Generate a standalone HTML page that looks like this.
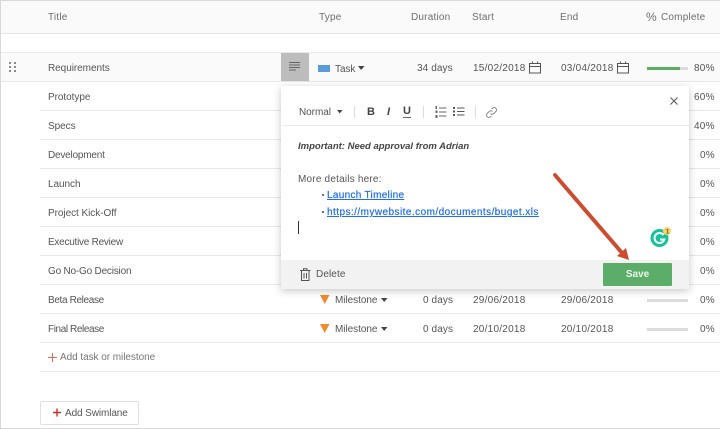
<!DOCTYPE html>
<html>
<head>
<meta charset="utf-8">
<style>
html,body{margin:0;padding:0;background:#fff}
#p{position:relative;width:720px;height:429px;overflow:hidden;background:#fff;font-family:"Liberation Sans",sans-serif;font-size:10px;color:#555}
#p div,#p span.a,#p svg{position:absolute}
.t{white-space:nowrap;line-height:14px;height:14px;margin-top:1px}
.l{height:1px;background:#e8e8e8}
.h{color:#6d6d6d;font-size:10px;letter-spacing:.2px}
.r{color:#555;letter-spacing:-.05px}
.d{color:#555;letter-spacing:.25px}
</style>
</head>
<body>
<div id="p">
<div style="left:0;top:0;width:720px;height:1px;background:#d8d8d8"></div>
<div style="left:0;top:0;width:1px;height:429px;background:#d8d8d8"></div>
<div style="left:0;top:428px;width:720px;height:1px;background:#d8d8d8"></div>
<div style="left:1px;top:1px;width:719px;height:32px;background:#fafafa"></div>
<div style="left:1px;top:33px;width:719px;height:1px;background:#e6e6e6"></div>
<div class="t h" style="left:48px;top:10px">Title</div>
<div class="t h" style="left:319px;top:10px">Type</div>
<div class="t h" style="left:411px;top:10px">Duration</div>
<div class="t h" style="left:472px;top:10px">Start</div>
<div class="t h" style="left:560px;top:10px">End</div>
<div class="t h" style="left:646px;top:9px;font-size:12px">%</div>
<div class="t h" style="left:661px;top:10px">Complete</div>

<div style="left:1px;top:52px;width:719px;height:1px;background:#e8e8e8"></div>
<div style="left:1px;top:53px;width:719px;height:28px;background:#fafafa"></div>
<div style="left:1px;top:81px;width:719px;height:1px;background:#e8e8e8"></div>
<div class="l" style="left:40px;top:110px;width:680px"></div>
<div class="l" style="left:40px;top:139px;width:680px"></div>
<div class="l" style="left:40px;top:168px;width:680px"></div>
<div class="l" style="left:40px;top:197px;width:680px"></div>
<div class="l" style="left:40px;top:226px;width:680px"></div>
<div class="l" style="left:40px;top:255px;width:680px"></div>
<div class="l" style="left:40px;top:284px;width:680px"></div>
<div class="l" style="left:40px;top:313px;width:680px"></div>
<div class="l" style="left:40px;top:342px;width:680px"></div>
<div class="l" style="left:40px;top:371px;width:680px"></div>

<svg style="left:9px;top:62px" width="8" height="11" viewBox="0 0 8 11" fill="#8a8a8a"><rect x="0" y="0" width="2" height="2"/><rect x="5" y="0" width="2" height="2"/><rect x="0" y="4" width="2" height="2"/><rect x="5" y="4" width="2" height="2"/><rect x="0" y="8" width="2" height="2"/><rect x="5" y="8" width="2" height="2"/></svg>

<div class="t r" style="left:48px;top:61px">Requirements</div>
<div class="t r" style="left:48px;top:90px">Prototype</div>
<div class="t r" style="left:48px;top:119px">Specs</div>
<div class="t r" style="left:48px;top:148px;letter-spacing:-.2px">Development</div>
<div class="t r" style="left:48px;top:177px">Launch</div>
<div class="t r" style="left:48px;top:206px">Project Kick-Off</div>
<div class="t r" style="left:48px;top:235px;letter-spacing:-.25px">Executive Review</div>
<div class="t r" style="left:48px;top:264px;letter-spacing:-.2px">Go No-Go Decision</div>
<div class="t r" style="left:48px;top:293px;letter-spacing:-.35px">Beta Release</div>
<div class="t r" style="left:48px;top:322px;letter-spacing:-.4px">Final Release</div>

<div style="left:281px;top:53px;width:28px;height:28px;background:#bdbdbd"></div>
<svg style="left:289px;top:62px" width="12" height="9" viewBox="0 0 12 9" fill="#666"><rect width="11" height="1"/><rect y="2.5" width="11" height="1"/><rect y="5" width="11" height="1"/><rect y="7.5" width="7" height="1"/></svg>
<div style="left:318px;top:65px;width:12px;height:7px;background:#5b9bd9"></div>
<div class="t r" style="left:335px;top:62px">Task</div>
<svg style="left:358px;top:66px" width="7" height="5"><path d="M0 0H6.5L3.2 4z" fill="#444"/></svg>
<div class="t d" style="left:417px;top:61px;letter-spacing:.1px">34 days</div>
<div class="t d" style="left:473px;top:61px">15/02/2018</div>
<svg style="left:529px;top:61px" width="13" height="13" viewBox="0 0 13 13" fill="none" stroke="#555"><rect x=".5" y="2.5" width="11" height="9.5"/><path d="M.5 5.5H11.5M3.5 .5V3M8.5 .5V3"/></svg>
<div class="t d" style="left:561px;top:61px">03/04/2018</div>
<svg style="left:617px;top:61px" width="13" height="13" viewBox="0 0 13 13" fill="none" stroke="#555"><rect x=".5" y="2.5" width="11" height="9.5"/><path d="M.5 5.5H11.5M3.5 .5V3M8.5 .5V3"/></svg>
<div style="left:647px;top:67px;width:41px;height:3px;background:#dcdcdc"></div>
<div style="left:647px;top:67px;width:33px;height:3px;background:#5cae62"></div>
<div class="t d" style="left:694px;top:61px">80%</div>
<div class="t d" style="left:694px;top:90px">60%</div>
<div class="t d" style="left:694px;top:119px">40%</div>
<div class="t d" style="left:700px;top:148px">0%</div>
<div class="t d" style="left:700px;top:177px">0%</div>
<div class="t d" style="left:700px;top:206px">0%</div>
<div class="t d" style="left:700px;top:235px">0%</div>
<div class="t d" style="left:700px;top:264px">0%</div>
<div class="t d" style="left:700px;top:293px">0%</div>
<div class="t d" style="left:700px;top:322px">0%</div>

<svg style="left:320px;top:295px" width="10" height="9"><path d="M0 0H9.5L4.7 9z" fill="#f08a2c"/></svg>
<div class="t r" style="left:335px;top:293px">Milestone</div>
<svg style="left:381px;top:298px" width="7" height="5"><path d="M0 0H6.5L3.2 4z" fill="#444"/></svg>
<div class="t d" style="left:423px;top:293px;letter-spacing:.1px">0 days</div>
<div class="t d" style="left:473px;top:293px">29/06/2018</div>
<div class="t d" style="left:561px;top:293px">29/06/2018</div>
<div style="left:647px;top:299px;width:41px;height:3px;background:#dcdcdc"></div>
<svg style="left:320px;top:324px" width="10" height="9"><path d="M0 0H9.5L4.7 9z" fill="#f08a2c"/></svg>
<div class="t r" style="left:335px;top:322px">Milestone</div>
<svg style="left:381px;top:327px" width="7" height="5"><path d="M0 0H6.5L3.2 4z" fill="#444"/></svg>
<div class="t d" style="left:423px;top:322px;letter-spacing:.1px">0 days</div>
<div class="t d" style="left:473px;top:322px">20/10/2018</div>
<div class="t d" style="left:561px;top:322px">20/10/2018</div>
<div style="left:647px;top:328px;width:41px;height:3px;background:#dcdcdc"></div>

<svg style="left:48px;top:353px" width="9" height="9"><path d="M4.5 0V9M0 4.5H9" stroke="#d9694f" stroke-width="1"/></svg>
<div class="t" style="left:60px;top:350px;color:#777;letter-spacing:-.05px">Add task or milestone</div>

<div style="left:40px;top:401px;width:97px;height:22px;border:1px solid #dfdfdf;border-radius:2px;background:#fff"></div>
<svg style="left:53px;top:408px" width="8" height="9"><path d="M4 .5V8.5M0 4.5H8" stroke="#c9302c" stroke-width="1.4"/></svg>
<div class="t" style="left:65px;top:406px;color:#555;letter-spacing:-.1px">Add Swimlane</div>

<!-- popup -->
<div style="left:281px;top:86px;width:408px;height:203px;background:#fff;box-shadow:0 2px 8px rgba(0,0,0,.22)"></div>
<div style="left:281px;top:260px;width:408px;height:29px;background:#f2f2f2"></div>
<div style="left:281px;top:125px;width:408px;height:1px;background:#ececec"></div>

<div class="t" style="left:299px;top:105px;color:#555;letter-spacing:-.05px">Normal</div>
<svg style="left:337px;top:110px" width="6" height="4"><path d="M0 0H5.5L2.7 3.5z" fill="#444"/></svg>
<div style="left:354px;top:106px;width:1px;height:12px;background:#ddd"></div>
<div class="t" style="left:367px;top:104px;font-weight:bold;color:#444;font-size:11px">B</div>
<div class="t" style="left:387px;top:104px;font-style:italic;font-weight:bold;color:#444;font-size:11px">I</div>
<div class="t" style="left:403px;top:103px;color:#444;font-size:11px;font-weight:bold">U</div>
<div style="left:403px;top:117px;width:8px;height:1px;background:#666"></div>
<div style="left:423px;top:106px;width:1px;height:12px;background:#ddd"></div>
<svg style="left:435px;top:106px" width="12" height="13" viewBox="0 0 12 13" fill="#666"><rect x="4" y="1.5" width="7.5" height="1"/><rect x="4" y="5.5" width="7.5" height="1"/><rect x="4" y="9.5" width="7.5" height="1"/><rect x=".5" y="0" width="1.5" height="3"/><rect x=".5" y="4.5" width="2" height="2.5"/><rect x=".5" y="9" width="2" height="3"/></svg>
<svg style="left:453px;top:106px" width="12" height="11" viewBox="0 0 12 11" fill="#555"><rect x="0" y="1" width="2" height="2"/><rect x="0" y="4.5" width="2" height="2"/><rect x="0" y="8" width="2" height="2"/><rect x="4" y="1.5" width="7.5" height="1"/><rect x="4" y="5" width="7.5" height="1"/><rect x="4" y="8.5" width="7.5" height="1"/></svg>
<div style="left:475px;top:106px;width:1px;height:12px;background:#ddd"></div>
<svg style="left:485px;top:106px" width="13" height="13" viewBox="0 0 13 13" fill="none" stroke="#888"><path d="M5.5 7.5a2.3 2.3 0 0 0 3.3 0l2-2a2.3 2.3 0 0 0-3.3-3.3l-1 1"/><path d="M7.5 5.5a2.3 2.3 0 0 0-3.3 0l-2 2a2.3 2.3 0 0 0 3.3 3.3l1-1"/></svg>
<svg style="left:670px;top:97px" width="8" height="8"><path d="M.5 .5L7.5 7.5M7.5 .5L.5 7.5" stroke="#555" stroke-width="1"/></svg>

<div class="t" style="left:298px;top:139px;font-style:italic;font-weight:bold;color:#444;font-size:9.5px">Important: Need approval from Adrian</div>
<div class="t" style="left:298px;top:172px;color:#555;letter-spacing:.2px">More details here:</div>
<div style="left:322px;top:194px;width:2px;height:2px;background:#444;border-radius:50%"></div>
<div class="t" style="left:327px;top:188px;color:#1f6fe5;text-decoration:underline;letter-spacing:.3px;-webkit-text-stroke:.2px #1f6fe5">Launch Timeline</div>
<div style="left:322px;top:211px;width:2px;height:2px;background:#444;border-radius:50%"></div>
<div class="t" style="left:327px;top:205px;color:#1f6fe5;text-decoration:underline;letter-spacing:.45px;-webkit-text-stroke:.2px #1f6fe5">https://mywebsite.com/documents/buget.xls</div>
<div style="left:298px;top:221px;width:1px;height:13px;background:#333"></div>

<svg style="left:650px;top:227px" width="24" height="21" viewBox="0 0 24 21"><circle cx="9.5" cy="11" r="9" fill="#15c39a"/><path d="M13.5 8a5 5 0 1 0 .8 4.5H10" fill="none" stroke="#fff" stroke-width="2"/><circle cx="17" cy="4" r="4" fill="#fbd46d"/><text x="15.7" y="6.5" font-size="6.5" font-weight="bold" fill="#7a5a10" font-family="Liberation Sans">1</text></svg>

<svg style="left:300px;top:268px" width="11" height="13" viewBox="0 0 11 13" fill="none" stroke="#555"><path d="M0 2.5H10.5M3.5 2.5V.7H7V2.5M1.5 2.5V12.5H9V2.5M4 5V10.5M6.5 5V10.5"/></svg>
<div class="t" style="left:316px;top:267px;color:#555;letter-spacing:.1px">Delete</div>

<div style="left:603px;top:263px;width:69px;height:23px;background:#5bad69;border-radius:1px"></div>
<div class="t" style="left:603px;top:267px;width:69px;text-align:center;color:#eef7ee;font-weight:bold;font-size:10px">Save</div>

<svg style="left:550px;top:170px" width="85" height="95" viewBox="0 0 85 95">
<path d="M5 5L73 84" stroke="rgba(0,0,0,.2)" stroke-width="4" fill="none" transform="translate(1,1.5)"/>
<path d="M5 5L73 84" stroke="#cf4b2f" stroke-width="3.8" stroke-linecap="round" fill="none"/>
<path d="M79 90L76 78L67 86z" fill="#cf4b2f"/>
</svg>
</div>
</body>
</html>
